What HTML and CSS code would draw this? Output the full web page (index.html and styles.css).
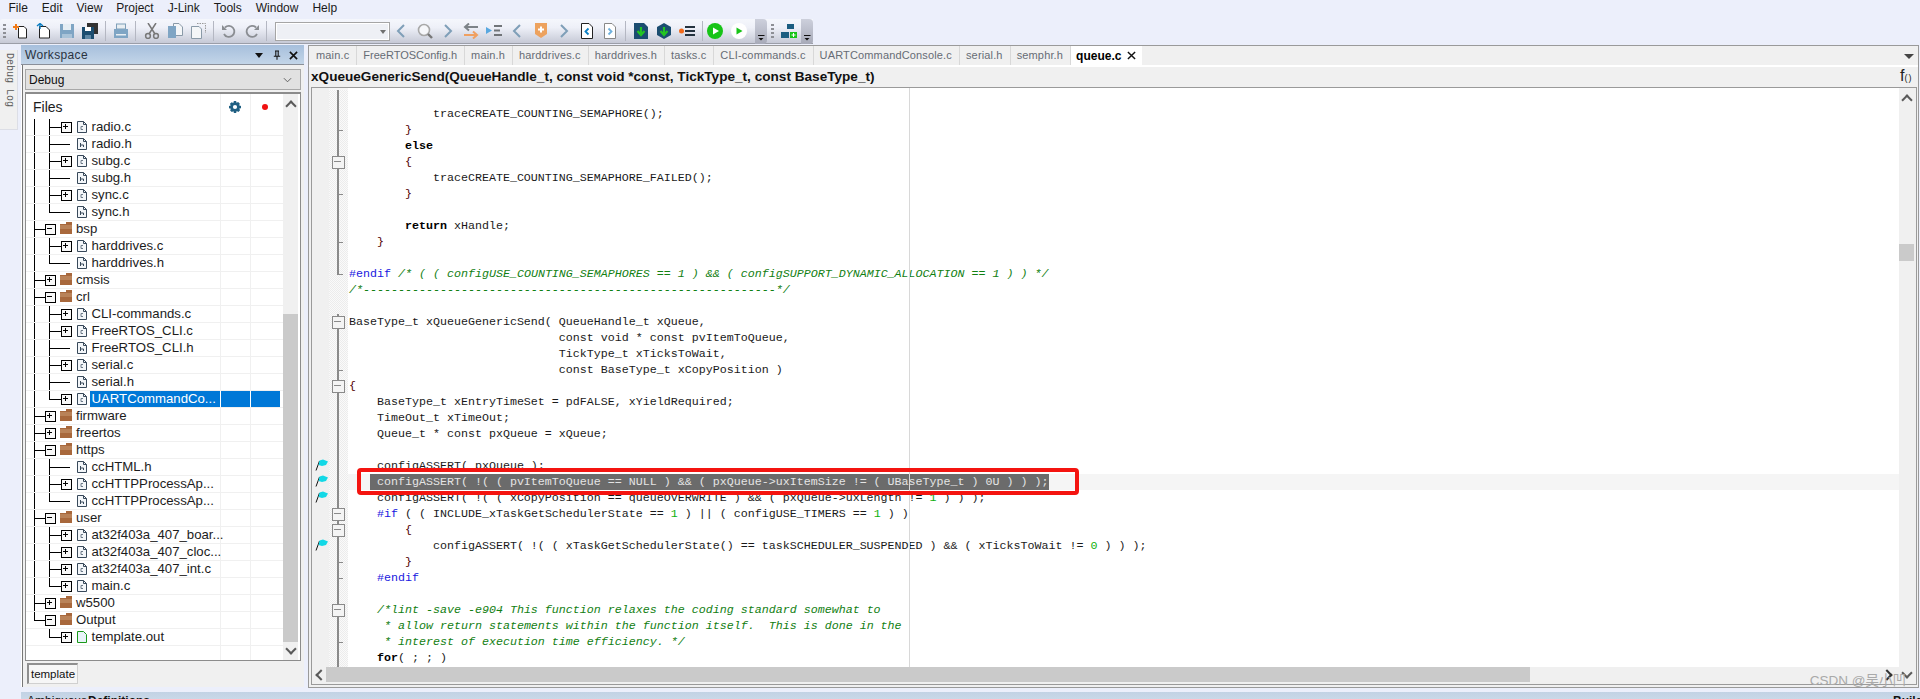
FILE: index.html
```html
<!DOCTYPE html>
<html lang="en">
<head>
<meta charset="utf-8">
<title>IAR Embedded Workbench</title>
<link rel="stylesheet" href="styles.css">
</head>
<body>
<svg class="defs" aria-hidden="true">
  <symbol id="fc" viewBox="0 0 10 12"><path d="M.5.5H6.5L9.5 3.5V11.5H.5Z" fill="#f3f6f9" stroke="#38495a"/><path d="M6.5.5V3.5H9.5" fill="none" stroke="#38495a"/><path d="M6 5.500H4V8.500H6" fill="none" stroke="#6c7a88"/></symbol>
  <symbol id="fh" viewBox="0 0 10 12"><path d="M.5.5H6.5L9.5 3.5V11.5H.5Z" fill="#f3f6f9" stroke="#38495a"/><path d="M6.5.5V3.5H9.5" fill="none" stroke="#38495a"/><path d="M3.500 5V9M3.500 7H6.500V9" fill="none" stroke="#38495a"/></symbol>
  <symbol id="fo" viewBox="0 0 10 12"><path d="M.5.5H6.5L9.5 3.5V11.5H.5Z" fill="#e8f3f8" stroke="#1a9a1a"/></symbol>
  <symbol id="dir" viewBox="0 0 12 12"><path d="M0 2H6V0H12V12H0Z" fill="#a8683c"/><rect y="3" width="12" height="4" fill="#b98258"/></symbol>
  <symbol id="flag" viewBox="0 0 14 12"><path d="M1 11.500L4.500 2" stroke="#111" fill="none"/><path d="M4.500 1.500L8 .5L13 2.500L11 6L7 7L3.500 6Z" fill="#12d8e6"/></symbol>
  <symbol id="prev" viewBox="0 0 16 16"><path d="M11 2L5 8L11 14" fill="none" stroke="#7f9fb8" stroke-width="2"/></symbol>
  <symbol id="next" viewBox="0 0 16 16"><path d="M5 2L11 8L5 14" fill="none" stroke="#7f9fb8" stroke-width="2"/></symbol>
</svg>

<nav class="menu">
  <span>File</span><span>Edit</span><span>View</span><span>Project</span><span>J-Link</span><span>Tools</span><span>Window</span><span>Help</span>
</nav>

<div class="bars">
  <div class="toolbar tb-main">
    <i class="grip"></i>
    <span class="btn"><svg viewBox="0 0 16 16"><path d="M5.500 3.500H11L13.500 6V15H5.500Z" fill="#fff" stroke="#222"/><path d="M0 4H6M3 1V7" stroke="#f07a18" stroke-width="2"/></svg></span>
    <span class="btn"><svg viewBox="0 0 16 16"><path d="M3.500 3.500H10L13.500 7V15H3.500Z" fill="#fff" stroke="#222"/><path d="M1 3L4 .5L7 3M4 1V6" fill="none" stroke="#0b7fc4" stroke-width="1.400"/></svg></span>
    <span class="btn"><svg viewBox="0 0 16 16"><path d="M1 1H15V15H1Z" fill="#7fa5c4"/><rect x="4" y="1" width="8" height="6" fill="#e6eef4"/><rect x="3" y="11" width="10" height="4" fill="#a9c3d8"/></svg></span>
    <span class="btn"><svg viewBox="0 0 16 16"><path d="M5 0H16V11H5Z" fill="#333"/><path d="M0 4H12V16H0Z" fill="#1b4d70"/><rect x="3" y="4" width="6" height="4" fill="#fff"/><rect x="3" y="12" width="6" height="4" fill="#5d87a5"/></svg></span>
    <i class="sep"></i>
    <span class="btn"><svg viewBox="0 0 16 16"><rect x="3.500" y="1" width="9" height="5" fill="#e8eef2" stroke="#7f9fb8"/><path d="M1 6H15V15H1Z" fill="#7fa5c4"/><rect x="3" y="11" width="10" height="1.500" fill="#e8eef2"/></svg></span>
    <i class="sep"></i>
    <span class="btn"><svg viewBox="0 0 16 16"><path d="M4 0L11 11M12 0L5 11" stroke="#777" stroke-width="1.500" fill="none"/><circle cx="4" cy="13" r="2.400" fill="none" stroke="#777" stroke-width="1.500"/><circle cx="12" cy="13" r="2.400" fill="none" stroke="#777" stroke-width="1.500"/></svg></span>
    <span class="btn"><svg viewBox="0 0 16 16"><path d="M6.500 .5H12L15.500 4V12.500H6.500Z" fill="#f4f6f8" stroke="#8a9aa8"/><path d="M1 3H9V15H1Z" fill="#7fa5c4"/></svg></span>
    <span class="btn"><svg viewBox="0 0 16 16"><path d="M1.500 3.500H9L11.500 6V15.500H1.500Z" fill="#f4f6f8" stroke="#8a9aa8"/><path d="M7 .5H15.500V10" fill="none" stroke="#999" stroke-dasharray="1.500 1"/></svg></span>
    <i class="sep"></i>
    <span class="btn"><svg viewBox="0 0 16 16"><path d="M4 4.500A5.500 5.500 0 1 1 3 11" fill="none" stroke="#8a8d92" stroke-width="1.800"/><path d="M1 2V7H6Z" fill="#8a8d92"/></svg></span>
    <span class="btn"><svg viewBox="0 0 16 16"><path d="M12 4.500A5.500 5.500 0 1 0 13 11" fill="none" stroke="#8a8d92" stroke-width="1.800"/><path d="M15 2V7H10Z" fill="#8a8d92"/></svg></span>
    <i class="sep"></i>
    <span class="combo"><i class="tri-sm"></i></span>
    <span class="btn"><svg><use href="#prev"/></svg></span>
    <span class="btn"><svg viewBox="0 0 16 16"><circle cx="7" cy="7" r="5.500" fill="#f6f7fa" stroke="#a8a8a8" stroke-width="1.600"/><path d="M11 11L15 15" stroke="#777" stroke-width="2.400"/></svg></span>
    <span class="btn"><svg><use href="#next"/></svg></span>
    <span class="btn"><svg viewBox="0 0 16 16"><path d="M15 4H3M6 .5L2 4L6 7.500" fill="none" stroke="#7d8388" stroke-width="2"/><path d="M1 12H13M10 8.500L14 12L10 15.500" fill="none" stroke="#f0a060" stroke-width="2"/></svg></span>
    <span class="btn"><svg viewBox="0 0 16 16"><path d="M0 4V11L6 7.500Z" fill="#58a8e0"/><path d="M8 3H16M8 7.500H14M8 12H16" stroke="#707478" stroke-width="2"/></svg></span>
    <span class="btn"><svg><use href="#prev"/></svg></span>
    <span class="btn"><svg viewBox="0 0 16 16"><path d="M2 0H14V11L8 15L2 11Z" fill="#eda25e"/><path d="M8 3.500V9.500M5 6.500H11" stroke="#fff" stroke-width="2"/></svg></span>
    <span class="btn"><svg><use href="#next"/></svg></span>
    <span class="btn"><svg viewBox="0 0 16 16"><path d="M2.500 .5H10L13.500 4V15.500H2.500Z" fill="#fff" stroke="#222"/><path d="M9.500 5.500L6.500 8.500L9.500 11.500" fill="none" stroke="#0b7fc4" stroke-width="1.800"/></svg></span>
    <span class="btn"><svg viewBox="0 0 16 16"><path d="M2.500 .5H10L13.500 4V15.500H2.500Z" fill="#fff" stroke="#888"/><path d="M6.500 5.500L9.500 8.500L6.500 11.500" fill="none" stroke="#6fb0dc" stroke-width="1.800"/></svg></span>
    <i class="sep"></i>
    <span class="btn"><svg viewBox="0 0 16 16"><path d="M1 0H11L15 4V16H1Z" fill="#1b4d70"/><path d="M8 4V11M4.500 8L8 12L11.500 8" fill="none" stroke="#22c522" stroke-width="2.200"/></svg></span>
    <span class="btn"><svg viewBox="0 0 16 16"><path d="M8 0L15 4V12L8 16L1 12V4Z" fill="#1b4d70"/><path d="M8 4V11M4.500 8L8 12L11.500 8" fill="none" stroke="#22c522" stroke-width="2.200"/></svg></span>
    <span class="btn"><svg viewBox="0 0 16 16"><circle cx="2.500" cy="8" r="2.500" fill="#f26a1b"/><path d="M6 4H16M6 8H16M6 12H16" stroke="#24323e" stroke-width="2.200"/></svg></span>
    <i class="sep narrow"></i>
    <span class="btn"><svg viewBox="0 0 16 16"><circle cx="8" cy="8" r="8" fill="#17c417"/><path d="M6 4.500V11.500L12 8Z" fill="#fff"/></svg></span>
    <span class="btn"><svg viewBox="0 0 16 16"><circle cx="8" cy="8" r="8" fill="#fff"/><path d="M5.500 4.500V11.500L11.500 8Z" fill="#17c417"/></svg></span>
    <span class="more"><i class="tri-more"></i></span>
  </div>
  <div class="toolbar tb-extra">
    <i class="grip"></i>
    <span class="btn wide"><svg viewBox="0 0 16 16"><rect x="6" y="1" width="7" height="5" fill="#1b5d80"/><rect x="0" y="9" width="8" height="6" fill="#1b5d80"/><rect x="9" y="9" width="7" height="6" fill="#17c417"/><path d="M12.500 10V14M10.500 12H14.500" stroke="#fff"/></svg></span>
    <span class="more"><i class="tri-more"></i></span>
  </div>
</div>

<main class="main">
  <aside class="rail"><div class="rail-tab">Debug Log</div></aside>

  <section class="workspace">
    <header class="ws-head">
      <span class="ws-title">Workspace</span>
      <i class="tri"></i>
      <svg class="ws-pin" viewBox="0 0 10 12"><path d="M2.500 1H7.500M3.500 1V7M6.500 1V7M1 7.500H9M5 8V12" fill="none" stroke="#111" stroke-width="1.300"/></svg>
      <svg class="ws-x" viewBox="0 0 10 10"><path d="M1 1L9 9M9 1L1 9" stroke="#111" stroke-width="1.800"/></svg>
    </header>
    <div class="ws-combo"><span>Debug</span><svg viewBox="0 0 10 6"><path d="M1 1L5 5L9 1" fill="none" stroke="#555"/></svg></div>
    <div class="files">
      <div class="tree">
        <div class="thead">
          <span class="th-name">Files</span>
          <span class="th"><svg viewBox="0 0 16 16"><path d="M6.500 0H9.500L10 2.300L12.200 1.300L14.500 3.500L13.400 5.700L16 6.500V9.500L13.700 10L14.700 12.200L12.500 14.500L10.300 13.400L9.500 16H6.500L6 13.700L3.800 14.700L1.500 12.500L2.600 10.300L0 9.500V6.500L2.300 6L1.300 3.800L3.500 1.500L5.700 2.600Z" fill="#1f5f82"/><circle cx="8" cy="8" r="2.800" fill="#fff"/></svg></span>
          <span class="th"><i class="dot"></i></span>
        </div>
        <div class="row"><div class="name"><i class="a v"></i><i class="b t"></i><i class="c p"></i><svg class="ic"><use href="#fc"/></svg><span>radio.c</span></div></div>
        <div class="row"><div class="name"><i class="a v"></i><i class="b t"></i><i class="c h"></i><svg class="ic"><use href="#fh"/></svg><span>radio.h</span></div></div>
        <div class="row"><div class="name"><i class="a v"></i><i class="b t"></i><i class="c p"></i><svg class="ic"><use href="#fc"/></svg><span>subg.c</span></div></div>
        <div class="row"><div class="name"><i class="a v"></i><i class="b t"></i><i class="c h"></i><svg class="ic"><use href="#fh"/></svg><span>subg.h</span></div></div>
        <div class="row"><div class="name"><i class="a v"></i><i class="b t"></i><i class="c p"></i><svg class="ic"><use href="#fc"/></svg><span>sync.c</span></div></div>
        <div class="row"><div class="name"><i class="a v"></i><i class="b l"></i><i class="c h"></i><svg class="ic"><use href="#fh"/></svg><span>sync.h</span></div></div>
        <div class="row"><div class="name"><i class="a t"></i><i class="b m"></i><svg class="dir"><use href="#dir"/></svg><span>bsp</span></div></div>
        <div class="row"><div class="name"><i class="a v"></i><i class="b t"></i><i class="c p"></i><svg class="ic"><use href="#fc"/></svg><span>harddrives.c</span></div></div>
        <div class="row"><div class="name"><i class="a v"></i><i class="b l"></i><i class="c h"></i><svg class="ic"><use href="#fh"/></svg><span>harddrives.h</span></div></div>
        <div class="row"><div class="name"><i class="a t"></i><i class="b p"></i><svg class="dir"><use href="#dir"/></svg><span>cmsis</span></div></div>
        <div class="row"><div class="name"><i class="a t"></i><i class="b m"></i><svg class="dir"><use href="#dir"/></svg><span>crl</span></div></div>
        <div class="row"><div class="name"><i class="a v"></i><i class="b t"></i><i class="c p"></i><svg class="ic"><use href="#fc"/></svg><span>CLI-commands.c</span></div></div>
        <div class="row"><div class="name"><i class="a v"></i><i class="b t"></i><i class="c p"></i><svg class="ic"><use href="#fc"/></svg><span>FreeRTOS_CLI.c</span></div></div>
        <div class="row"><div class="name"><i class="a v"></i><i class="b t"></i><i class="c h"></i><svg class="ic"><use href="#fh"/></svg><span>FreeRTOS_CLI.h</span></div></div>
        <div class="row"><div class="name"><i class="a v"></i><i class="b t"></i><i class="c p"></i><svg class="ic"><use href="#fc"/></svg><span>serial.c</span></div></div>
        <div class="row"><div class="name"><i class="a v"></i><i class="b t"></i><i class="c h"></i><svg class="ic"><use href="#fh"/></svg><span>serial.h</span></div></div>
        <div class="row selected"><div class="name"><i class="a v"></i><i class="b l"></i><i class="c p"></i><svg class="ic"><use href="#fc"/></svg><span>UARTCommandCo...</span></div></div>
        <div class="row"><div class="name"><i class="a t"></i><i class="b p"></i><svg class="dir"><use href="#dir"/></svg><span>firmware</span></div></div>
        <div class="row"><div class="name"><i class="a t"></i><i class="b p"></i><svg class="dir"><use href="#dir"/></svg><span>freertos</span></div></div>
        <div class="row"><div class="name"><i class="a t"></i><i class="b m"></i><svg class="dir"><use href="#dir"/></svg><span>https</span></div></div>
        <div class="row"><div class="name"><i class="a v"></i><i class="b t"></i><i class="c h"></i><svg class="ic"><use href="#fh"/></svg><span>ccHTML.h</span></div></div>
        <div class="row"><div class="name"><i class="a v"></i><i class="b t"></i><i class="c p"></i><svg class="ic"><use href="#fc"/></svg><span>ccHTTPProcessAp...</span></div></div>
        <div class="row"><div class="name"><i class="a v"></i><i class="b l"></i><i class="c h"></i><svg class="ic"><use href="#fh"/></svg><span>ccHTTPProcessAp...</span></div></div>
        <div class="row"><div class="name"><i class="a t"></i><i class="b m"></i><svg class="dir"><use href="#dir"/></svg><span>user</span></div></div>
        <div class="row"><div class="name"><i class="a v"></i><i class="b t"></i><i class="c p"></i><svg class="ic"><use href="#fc"/></svg><span>at32f403a_407_boar...</span></div></div>
        <div class="row"><div class="name"><i class="a v"></i><i class="b t"></i><i class="c p"></i><svg class="ic"><use href="#fc"/></svg><span>at32f403a_407_cloc...</span></div></div>
        <div class="row"><div class="name"><i class="a v"></i><i class="b t"></i><i class="c p"></i><svg class="ic"><use href="#fc"/></svg><span>at32f403a_407_int.c</span></div></div>
        <div class="row"><div class="name"><i class="a v"></i><i class="b l"></i><i class="c p"></i><svg class="ic"><use href="#fc"/></svg><span>main.c</span></div></div>
        <div class="row"><div class="name"><i class="a t"></i><i class="b p"></i><svg class="dir"><use href="#dir"/></svg><span>w5500</span></div></div>
        <div class="row"><div class="name"><i class="a l"></i><i class="b m"></i><svg class="dir"><use href="#dir"/></svg><span>Output</span></div></div>
        <div class="row"><div class="name"><i class="a"></i><i class="b l"></i><i class="c p"></i><svg class="ic"><use href="#fo"/></svg><span>template.out</span></div></div>
        <div class="row-fill"></div>
      </div>
      <div class="vscroll tree-scroll">
        <i class="arrow up"></i>
        <i class="thumb"></i>
        <i class="arrow down"></i>
      </div>
    </div>
    <div class="ws-tabs"><span class="ws-tab">template</span></div>
  </section>

  <section class="editor">
    <div class="tabs">
      <span class="tab first">main.c</span>
      <span class="tab tight">FreeRTOSConfig.h</span>
      <span class="tab">main.h</span>
      <span class="tab">harddrives.c</span>
      <span class="tab">harddrives.h</span>
      <span class="tab">tasks.c</span>
      <span class="tab">CLI-commands.c</span>
      <span class="tab">UARTCommandConsole.c</span>
      <span class="tab">serial.h</span>
      <span class="tab">semphr.h</span>
      <span class="tab active">queue.c<svg viewBox="0 0 10 10"><path d="M1 1L9 9M9 1L1 9" stroke="#111" stroke-width="1.600"/></svg></span>
      <i class="tabs-menu"></i>
    </div>
    <div class="func">
      <span class="func-name">xQueueGenericSend(QueueHandle_t, const void *const, TickType_t, const BaseType_t)</span>
      <span class="func-btn">f<small>()</small></span>
    </div>
    <div class="pane">
      <div class="code">
        <div class="ln"><b class="mk"></b><b class="fd line"></b><pre></pre></div>
        <div class="ln"><b class="mk"></b><b class="fd line"></b><pre>            traceCREATE_COUNTING_SEMAPHORE();</pre></div>
        <div class="ln"><b class="mk"></b><b class="fd tick"></b><pre>        <s>}</s></pre></div>
        <div class="ln"><b class="mk"></b><b class="fd line"></b><pre>        <em>else</em></pre></div>
        <div class="ln"><b class="mk"></b><b class="fd box"></b><pre>        <s>{</s></pre></div>
        <div class="ln"><b class="mk"></b><b class="fd line"></b><pre>            traceCREATE_COUNTING_SEMAPHORE_FAILED();</pre></div>
        <div class="ln"><b class="mk"></b><b class="fd tick"></b><pre>        <s>}</s></pre></div>
        <div class="ln"><b class="mk"></b><b class="fd line"></b><pre></pre></div>
        <div class="ln"><b class="mk"></b><b class="fd line"></b><pre>        <em>return</em> xHandle;</pre></div>
        <div class="ln"><b class="mk"></b><b class="fd tick"></b><pre>    <s>}</s></pre></div>
        <div class="ln"><b class="mk"></b><b class="fd line"></b><pre></pre></div>
        <div class="ln"><b class="mk"></b><b class="fd end"></b><pre><u>#endif</u> <q>/* ( ( configUSE_COUNTING_SEMAPHORES == 1 ) &amp;&amp; ( configSUPPORT_DYNAMIC_ALLOCATION == 1 ) ) */</q></pre></div>
        <div class="ln"><b class="mk"></b><b class="fd"></b><pre><q>/*-----------------------------------------------------------*/</q></pre></div>
        <div class="ln"><b class="mk"></b><b class="fd"></b><pre></pre></div>
        <div class="ln"><b class="mk"></b><b class="fd box"></b><pre>BaseType_t xQueueGenericSend( QueueHandle_t xQueue,</pre></div>
        <div class="ln"><b class="mk"></b><b class="fd line"></b><pre>                              const void * const pvItemToQueue,</pre></div>
        <div class="ln"><b class="mk"></b><b class="fd line"></b><pre>                              TickType_t xTicksToWait,</pre></div>
        <div class="ln"><b class="mk"></b><b class="fd tick"></b><pre>                              const BaseType_t xCopyPosition )</pre></div>
        <div class="ln"><b class="mk"></b><b class="fd box"></b><pre><s>{</s></pre></div>
        <div class="ln"><b class="mk"></b><b class="fd line"></b><pre>    BaseType_t xEntryTimeSet = pdFALSE, xYieldRequired;</pre></div>
        <div class="ln"><b class="mk"></b><b class="fd line"></b><pre>    TimeOut_t xTimeOut;</pre></div>
        <div class="ln"><b class="mk"></b><b class="fd line"></b><pre>    Queue_t * const pxQueue = xQueue;</pre></div>
        <div class="ln"><b class="mk"></b><b class="fd line"></b><pre></pre></div>
        <div class="ln"><b class="mk"><svg><use href="#flag"/></svg></b><b class="fd line"></b><pre>    configASSERT( pxQueue );</pre></div>
        <div class="ln current"><b class="mk"><svg><use href="#flag"/></svg></b><b class="fd line"></b><pre class="sel-line"><span class="sel">    configASSERT( !( ( pvItemToQueue == NULL ) &amp;&amp; ( pxQueue-&gt;uxItemSize != ( UBaseType_t ) 0U ) ) );</span></pre></div>
        <div class="ln"><b class="mk"><svg><use href="#flag"/></svg></b><b class="fd line"></b><pre>    configASSERT( !( ( xCopyPosition == queueOVERWRITE ) &amp;&amp; ( pxQueue-&gt;uxLength != <var>1</var> ) ) );</pre></div>
        <div class="ln"><b class="mk"></b><b class="fd box"></b><pre>    <u>#if</u> ( ( INCLUDE_xTaskGetSchedulerState == <var>1</var> ) || ( configUSE_TIMERS == <var>1</var> ) )</pre></div>
        <div class="ln"><b class="mk"></b><b class="fd box"></b><pre>        <s>{</s></pre></div>
        <div class="ln"><b class="mk"><svg><use href="#flag"/></svg></b><b class="fd line"></b><pre>            configASSERT( !( ( xTaskGetSchedulerState() == taskSCHEDULER_SUSPENDED ) &amp;&amp; ( xTicksToWait != <var>0</var> ) ) );</pre></div>
        <div class="ln"><b class="mk"></b><b class="fd tick"></b><pre>        <s>}</s></pre></div>
        <div class="ln"><b class="mk"></b><b class="fd tick"></b><pre>    <u>#endif</u></pre></div>
        <div class="ln"><b class="mk"></b><b class="fd line"></b><pre></pre></div>
        <div class="ln"><b class="mk"></b><b class="fd box"></b><pre>    <q>/*lint -save -e904 This function relaxes the coding standard somewhat to</q></pre></div>
        <div class="ln"><b class="mk"></b><b class="fd line"></b><pre>    <q> * allow return statements within the function itself.  This is done in the</q></pre></div>
        <div class="ln"><b class="mk"></b><b class="fd tick"></b><pre>    <q> * interest of execution time efficiency. */</q></pre></div>
        <div class="ln"><b class="mk"></b><b class="fd line"></b><pre>    <em>for</em>( ; ; )</pre></div>
        <div class="ln"><b class="mk"></b><b class="fd line"></b><pre></pre></div>
        <i class="ruler"></i>
        <i class="callout"></i>
      </div>
      <div class="vscroll edit-scroll">
        <i class="arrow up"></i>
        <i class="thumb"></i>
        <i class="arrow down"></i>
      </div>
      <div class="hscroll">
        <i class="arrow left"></i>
        <i class="thumb"></i>
        <i class="arrow right"></i>
      </div>
      <span class="watermark">CSDN @吴小凹</span>
    </div>
  </section>
</main>

<footer class="status">
  <span class="st-a">Ambiguous</span>
  <span class="st-b">Definitions</span>
  <span class="st-c">Build</span>
</footer>
</body>
</html>
```
FILE: styles.css
```css
* { box-sizing: border-box; }
html, body { height: 100%; }
body {
  margin: 0;
  height: 699px;
  overflow: hidden;
  background: #eceffb;
  font-family: "Liberation Sans", Arial, sans-serif;
  color: #111;
  display: flex;
  flex-direction: column;
}
i, b, s, u, em, q, var { font-style: normal; font-weight: normal; text-decoration: none; }
q { quotes: none; }
.defs { position: absolute; width: 0; height: 0; }

/* menu */
.menu {
  height: 19px;
  flex: none;
  display: flex;
  align-items: center;
  gap: 14px;
  padding: 0 0 4px 8.5px;
  font-size: 12px;
  color: #1a1a1a;
}

/* toolbars */
.bars { height: 26px; flex: none; display: flex; }
.toolbar {
  height: 25px;
  display: flex;
  align-items: center;
  background: linear-gradient(#f5f7fc 0%, #eef0f8 35%, #c6c9d6 100%);
  border-bottom: 1px solid #9b9ea8;
}
.tb-main { width: 767px; padding-left: 3px; border-radius: 3px 0 0 0; }
.tb-extra { width: 46px; padding-left: 4px; }
.grip {
  width: 3px;
  height: 15px;
  margin-right: 3px;
  flex: none;
  background: repeating-linear-gradient(#8d8f95 0 2px, transparent 2px 4px);
}
.btn {
  flex: none;
  width: 23.2px;
  height: 24px;
  display: flex;
  align-items: center;
  justify-content: center;
}
.btn svg { width: 16px; height: 16px; display: block; }
.btn.wide { width: 24px; }
.sep { flex: none; width: 7.5px; height: 20px; background: linear-gradient(#b4b7c2, #b4b7c2) no-repeat 3px 0 / 1px 100%; }
.sep.narrow { width: 5px; }
.combo {
  flex: none;
  width: 115px;
  height: 19px;
  margin-left: 4px;
  background: #eef0f5;
  border: 1px solid #a5a5a5;
  position: relative;
  box-shadow: inset 0 0 0 1px #fff;
}
.tri-sm {
  position: absolute;
  right: 3px;
  top: 7px;
  border: 3px solid transparent;
  border-top: 4px solid #707070;
  border-bottom: 0;
}
.more {
  flex: none;
  width: 12px;
  height: 25px;
  margin-left: auto;
  border-radius: 0 4px 4px 0;
  background: linear-gradient(#cdd0dc, #a7aab8);
  display: flex;
  justify-content: center;
  align-items: flex-end;
  padding-bottom: 3px;
}
.tri-more {
  width: 7px;
  height: 6px;
  border-top: 1px solid #111;
  background: linear-gradient(#111, #111) no-repeat 0 2px / 7px 4px;
  clip-path: polygon(0 0, 100% 0, 100% 30%, 100% 40%, 50% 100%, 0 40%);
}

/* main area */
.main { flex: 1; min-height: 0; display: flex; }
.rail { width: 21px; flex: none; }
.rail-tab {
  margin-top: 5px;
  width: 18px;
  height: 80px;
  background: #f0f0f0;
  border-right: 1px solid #dcdee6;
  border-bottom: 1px solid #dcdee6;
  writing-mode: vertical-rl;
  font: 10px/16px "Liberation Mono", monospace;
  color: #5c5c5c;
  padding-top: 3px;
}

/* workspace */
.workspace {
  width: 283px;
  height: 642px;
  flex: none;
  display: flex;
  flex-direction: column;
  background: #f0f0f0;
  border-left: 1px solid #fff;
  box-shadow: inset 1px 0 #777;
}
.ws-head {
  height: 20px;
  flex: none;
  display: flex;
  align-items: center;
  margin-left: -1px;
  padding: 1px 5px 0 4px;
  background: linear-gradient(#a6bfdc, #c3d5e8);
  border-bottom: 1px solid #8a8f99;
  font-size: 12px;
  letter-spacing: .35px;
  color: #2a3340;
}
.ws-title { flex: 1; }
.tri { border: 4.5px solid transparent; border-top: 5px solid #111; border-bottom: 0; margin-right: 10px; }
.ws-pin { width: 8px; height: 10px; margin-right: 8px; }
.ws-x { width: 9px; height: 9px; margin-right: 1px; }
.ws-combo {
  height: 21px;
  flex: none;
  margin: 4px 3px 2px 3px;
  display: flex;
  align-items: center;
  justify-content: space-between;
  padding: 0 8px 0 3px;
  background: #e1e1e1;
  border: 1px solid #a8a8a8;
  font-size: 12px;
}
.ws-combo svg { width: 9px; height: 6px; }
.files {
  flex: 1;
  min-height: 0;
  margin: 0 3px;
  display: flex;
  background: #fff;
  border: 1px solid #8c8c8c;
  border-top-width: 2px;
}
.tree { flex: 1; min-width: 0; display: flex; flex-direction: column; font-size: 13.2px; color: #1c1c1c; }
.thead, .row, .row-fill {
  flex: none;
  display: grid;
  grid-template-columns: 194px 30px 30px;
  background: linear-gradient(#f0f0f0, #f0f0f0) no-repeat 194px 0 / 1px 100%, linear-gradient(#f0f0f0, #f0f0f0) no-repeat 224px 0 / 1px 100%;
}
.thead { height: 25px; align-items: center; }
.th-name { padding-left: 7px; font-size: 14px; }
.th { display: flex; justify-content: center; align-items: center; height: 24px; }
.th svg { width: 12px; height: 12px; }
.dot { width: 6px; height: 6px; border-radius: 50%; background: #f01010; }
.row { height: 17px; box-shadow: inset 0 -1px #f0f0f0; }
.row-fill { flex: 1; }
.name { display: flex; align-items: flex-start; height: 16px; white-space: nowrap; }
.name span { line-height: 16px; margin-left: 1px; }
.a, .b, .c { flex: none; height: 16px; display: flex; align-items: center; }
.a { width: 15px; }
.b { width: 16px; }
.c { width: 17px; }
.v { background: linear-gradient(#000, #000) no-repeat 8px 0 / 1px 16px; }
.t { background: linear-gradient(#000, #000) no-repeat 8px 0 / 1px 16px, linear-gradient(#000, #000) no-repeat 8px 8px / 100% 1px; }
.l { background: linear-gradient(#000, #000) no-repeat 8px 0 / 1px 9px, linear-gradient(#000, #000) no-repeat 8px 8px / 100% 1px; }
.h { background: linear-gradient(#000, #000) no-repeat 0 8px / 13px 1px; }
.p, .m { background: linear-gradient(#000, #000) no-repeat 0 8px / 4px 1px; }
.p::before, .m::before {
  content: "";
  width: 9px;
  height: 9px;
  margin: 1px 0 0 4px;
  border: 1px solid #000;
  background: linear-gradient(#000, #000) no-repeat 1px 3px / 5px 1px, #f8f8f8;
}
.p::before { background: linear-gradient(#000, #000) no-repeat 1px 3px / 5px 1px, linear-gradient(#000, #000) no-repeat 3px 1px / 1px 5px, #f8f8f8; }
.ic { width: 10px; height: 12px; margin: 2px 0 0 3px; flex: none; }
.ic + span { margin-left: 4.5px; }
.dir { width: 12px; height: 12px; margin: 1px 3px 0 3px; flex: none; }
.selected .name span { background: #0078d7; color: #fff; width: 130px; margin-left: 3px; padding-left: 1.5px; height: 16px; }
.selected { background: linear-gradient(#fff, #fff) no-repeat 194px 0 / 1px 100%, linear-gradient(#fff, #fff) no-repeat 224px 0 / 1px 100%, linear-gradient(#0078d7, #0078d7) no-repeat 64px 0 / 190px 16px; }

/* scrollbars */
.vscroll { flex: none; width: 15px; background: #f0f0f0; display: flex; flex-direction: column; align-items: stretch; }
.thumb { background: #cacaca; display: block; }
.arrow { display: block; flex: none; position: relative; }
.arrow::before {
  content: "";
  position: absolute;
  width: 6px;
  height: 6px;
  left: 50%;
  top: 50%;
  border: solid #5a5a5a;
  border-width: 2px 0 0 2px;
  transform: translate(-50%, -50%) rotate(45deg);
}
.arrow.up::before { margin-top: 2px; }
.arrow.down::before { transform: translate(-50%, -50%) rotate(225deg); margin-top: -2px; }
.arrow.left::before { transform: translate(-50%, -50%) rotate(-45deg); margin-left: 2px; }
.arrow.right::before { transform: translate(-50%, -50%) rotate(135deg); margin-left: -2px; border-color: #333; }
.tree-scroll { margin-right: 2px; }
.tree-scroll .arrow { height: 20px; }
.tree-scroll .thumb { margin-top: 200px; height: 329px; }
.tree-scroll .arrow.down { margin-top: auto; height: 18px; }

/* workspace tabs */
.ws-tabs { height: 26px; flex: none; padding: 2px 0 0 5px; }
.ws-tab {
  display: block;
  width: 51px;
  height: 21px;
  border: 1px solid #d0d0d0;
  border-top: 2px solid #8f8f8f;
  border-left: 2px solid #8f8f8f;
  background: #f6f6f6;
  font-size: 11.5px;
  line-height: 18px;
  text-align: center;
}

/* editor */
.editor {
  width: 1611px;
  margin-left: 4px;
  height: 643px;
  flex: none;
  display: flex;
  flex-direction: column;
  background: #f0f0f0;
  border: 1px solid #9a9a9a;
}
.tabs {
  height: 21px;
  flex: none;
  display: flex;
  border-bottom: 2px solid #fff;
  font-size: 11px;
  color: #666c75;
}
.tab {
  flex: none;
  display: flex;
  align-items: center;
  padding: 0 7px 1px 6px;
  border-right: 1px solid #d8d8d8;
  letter-spacing: .15px;
}
.tab.first { padding-left: 7px; }
.tab.tight { letter-spacing: 0; }
.tab.active {
  background: #fff;
  color: #000;
  font-weight: bold;
  font-size: 12px;
  padding: 0 6px 0 5px;
  width: 71px;
  justify-content: space-between;
  border-right: 0;
  letter-spacing: 0;
}
.tab svg { width: 9px; height: 9px; }
.tabs-menu { margin: 8px 4px 0 auto; height: 0; border: 5px solid transparent; border-top: 5px solid #444; border-bottom: 0; }
.func {
  height: 20px;
  flex: none;
  display: flex;
  align-items: center;
  justify-content: space-between;
  padding: 0 0 1px 2px;
  font-size: 13.6px;
  font-weight: bold;
  color: #111;
}
.func-btn { font: 16px/18px "Liberation Sans", sans-serif; width: 18px; color: #222; white-space: nowrap; }
.func-btn small { font-size: 9px; letter-spacing: 1px; }
.pane {
  flex: 1;
  min-height: 0;
  margin: 0 1px 2px 2px;
  padding: 0 2px 2px 0;
  border: 1px solid #9a9a9a;
  display: grid;
  grid-template-columns: minmax(0, 1fr) 15px;
  grid-template-rows: minmax(0, 1fr) 15px;
  position: relative;
  background: #f0f0f0;
}
.code {
  min-width: 0;
  position: relative;
  overflow: hidden;
  padding-top: 2px;
  background: linear-gradient(90deg, #f0f0f0 17px, #f6f6f6 17px, #f6f6f6 36px, #fff 36px);
  font: 11.67px/16px "Liberation Mono", "Courier New", monospace;
  color: #1a1a1a;
}
.ln { display: grid; grid-template-columns: 17px 19px 1fr; height: 16px; }
.ln.current { background: linear-gradient(#f5f5f5, #f5f5f5) no-repeat 36px 0; }
.mk { position: relative; }
.mk svg { width: 14px; height: 12px; display: block; margin: 1px 0 0 3px; }
.fd {
  background: conic-gradient(#ececec 25%, #fafafa 0 50%, #ececec 0 75%, #fafafa 0) 0 0 / 2px 2px;
  position: relative;
}
.fd::before, .fd::after { content: ""; position: absolute; background: #8a8a8a; }
.line::before, .box::before, .tick::before { left: 8px; top: 0; width: 1.5px; height: 16px; }
.end::before { left: 8px; top: 0; width: 1.5px; height: 9px; }
.tick::after, .end::after { left: 8px; top: 8px; width: 6px; height: 1px; }
.box::after {
  left: 3px;
  top: 2px;
  width: 11px;
  height: 11px;
  border: 1px solid #8a8a8a;
  background: linear-gradient(#8a8a8a, #8a8a8a) no-repeat 1px 4px / 7px 1px, #f4f4f4;
}
.ln pre { margin: 0; font: inherit; white-space: pre; padding-left: 1px; }
.ln s { color: #500000; }
.ln em { font-weight: bold; color: #000; }
.ln u { color: #1818e0; }
.ln q { color: #128012; font-style: italic; }
.ln var { color: #10b010; }
.sel-line { padding-left: 22px !important; }
.sel { display: inline-block; height: 16px; background: #6b6b6b; color: #e4e4e4; text-indent: -21px; }
.ruler { position: absolute; left: 597px; top: 0; bottom: 0; width: 1px; background: #d8d8d8; }
.callout {
  position: absolute;
  left: 45px;
  top: 380px;
  width: 722px;
  height: 27px;
  border: 4px solid #f41410;
  border-radius: 4px;
}
.edit-scroll { grid-column: 2; grid-row: 1 / 3; }
.edit-scroll .arrow { height: 20px; }
.edit-scroll .thumb { margin-top: 136px; height: 17px; }
.edit-scroll .arrow.down { margin-top: auto; height: 15px; }
.hscroll { grid-column: 1; grid-row: 2; background: #f0f0f0; display: flex; }
.hscroll .arrow { width: 14px; }
.hscroll .thumb { width: 1204px; }
.hscroll .arrow.right { margin: 0 3px 0 auto; width: 14px; }
.watermark {
  position: absolute;
  right: 10px;
  bottom: -6px;
  font: 13.5px/18px "Liberation Sans", "Noto Sans CJK SC", sans-serif;
  color: #a9a9a9;
}

/* status */
.status {
  height: 7px;
  flex: none;
  margin-left: 21px;
  overflow: hidden;
  background: linear-gradient(#c2d2e4, #c9d8e8);
  padding: 2px 0 0 6px;
  display: flex;
  font-size: 12px;
  line-height: 14px;
  color: #111;
}
.st-a { width: 61px; }
.st-b { font-weight: bold; flex: 1; }
.st-c { font-weight: bold; width: 27px; }
```
